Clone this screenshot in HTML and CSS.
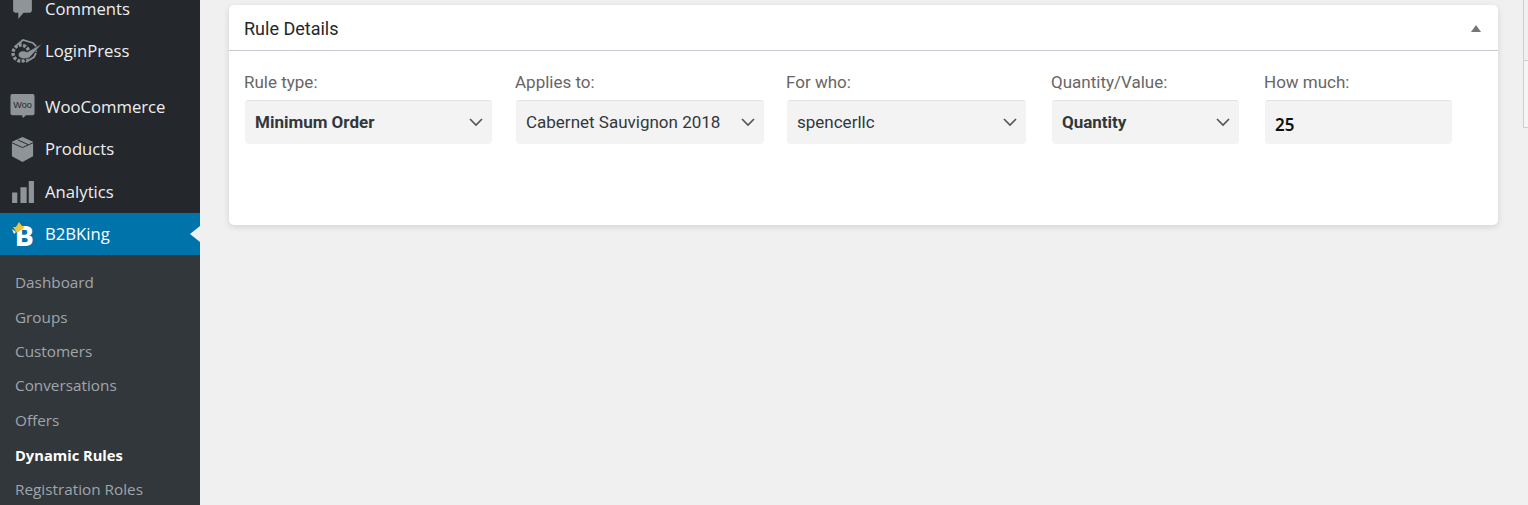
FILE: index.html
```html
<!DOCTYPE html>
<html lang="en">

<head>
    <meta charset="UTF-8">
    <meta name="viewport" content="width=device-width, initial-scale=1.0">
    <title>Rule Details</title>
    <link rel="stylesheet" href="styles.css">
</head>

<body>
    <div id="wrap">
        <!-- Admin menu -->
        <nav id="admin-menu">
            <ul class="top-menu">
                <li class="menu-item item-comments">
                    <svg class="menu-icon" viewBox="0 0 24 24"><path fill="#8f9498" d="M3 0h18v14q0 2-2 2h-6l-5 6v-6H5q-2 0-2-2z"/></svg>
                    <span>Comments</span>
                </li>
                <li class="menu-item item-login">
                    <svg class="menu-icon wide" viewBox="0 0 33 24"><circle cx="11" cy="14" r="8" fill="none" stroke="#8f9498" stroke-width="3.4" stroke-dasharray="3 1.4"/><path fill="none" stroke="#8f9498" stroke-width="1.8" d="M7 6l6-5 10 3 3 3v6M26 14l-2 4-8 5"/><path fill="#8f9498" stroke="#24282d" stroke-width="0.8" d="M8 16q1-5 7-4l2 1L33 4 22 16q-2 4-8 4-5 0-6-4z"/></svg>
                    <span>LoginPress</span>
                </li>
                <li class="menu-item item-woo">
                    <svg class="menu-icon" viewBox="0 0 25 26"><path fill="#8f9498" d="M2 0h21q2 0 2 2v18q0 2-2 2h-7l-3 3-1-3H2q-2 0-2-2V2q0-2 2-2z"/><text class="woo-text" x="12.500" y="15" text-anchor="middle">Woo</text></svg>
                    <span>WooCommerce</span>
                </li>
                <li class="menu-item item-products">
                    <svg class="menu-icon" viewBox="0 0 24 26"><path fill="#8f9498" d="M12 0l11 5v15l-11 6-11-6V5z"/><path fill="none" stroke="#24282d" d="M1 6l11 5 11-5M7 3l11 5"/></svg>
                    <span>Products</span>
                </li>
                <li class="menu-item item-analytics">
                    <svg class="menu-icon" viewBox="0 0 24 24"><path fill="#8f9498" d="M2 13h5v10H2zM10 8h6v15h-6zM18 2h5v21h-5z"/></svg>
                    <span>Analytics</span>
                </li>
                <li class="menu-item current">
                    <svg class="menu-icon" viewBox="0 0 25 25"><text class="logo-b" x="5.500" y="23.500">B</text><path fill="#fff" d="M2 7l4 3-2 2z"/><path fill="#f0c33c" d="M3 5l3 0 3-5 3 4 3 1-8 6z"/></svg>
                    <span>B2BKing</span>
                </li>
            </ul>
            <ul class="sub-menu">
                <li>Dashboard</li>
                <li>Groups</li>
                <li>Customers</li>
                <li>Conversations</li>
                <li>Offers</li>
                <li class="active">Dynamic Rules</li>
                <li>Registration Roles</li>
            </ul>
        </nav>

        <!-- Page content -->
        <main id="content">
            <section class="postbox">
                <header class="postbox-head">
                    <h2>Rule Details</h2>
                    <span class="toggle"></span>
                </header>
                <div class="rule-fields">
                    <div class="field field-type">
                        <label>Rule type:</label>
                        <div class="select bold">Minimum Order<svg viewBox="0 0 14 9"><path d="M1 1l6 6 6-6"/></svg></div>
                    </div>
                    <div class="field field-applies">
                        <label>Applies to:</label>
                        <div class="select">Cabernet Sauvignon 2018<svg viewBox="0 0 14 9"><path d="M1 1l6 6 6-6"/></svg></div>
                    </div>
                    <div class="field field-who">
                        <label>For who:</label>
                        <div class="select">spencerllc<svg viewBox="0 0 14 9"><path d="M1 1l6 6 6-6"/></svg></div>
                    </div>
                    <div class="field field-qty">
                        <label>Quantity/Value:</label>
                        <div class="select bold">Quantity<svg viewBox="0 0 14 9"><path d="M1 1l6 6 6-6"/></svg></div>
                    </div>
                    <div class="field field-much">
                        <label>How much:</label>
                        <div class="select amount">25</div>
                    </div>
                </div>
            </section>
        </main>
        <div class="edge-box"></div>
    </div>
</body>

</html>
```

FILE: styles.css
```css
html,
body {
    margin: 0;
    height: 505px;
    overflow: hidden;
}

body {
    background-color: #f0f0f1;
    font-family: "Open Sans", sans-serif;
}

#wrap {
    display: flex;
    height: 505px;
    position: relative;
}

/* Admin menu */
#admin-menu {
    width: 200px;
    flex-shrink: 0;
    background-color: #24282d;
    overflow: hidden;
}

ul {
    list-style: none;
    margin: 0;
    padding: 0;
}

.top-menu {
    margin-top: -13px;
}

.menu-item {
    display: flex;
    align-items: center;
    height: 42.5px;
    padding-left: 10px;
    color: #eeeeee;
    font-size: 16.7px;
    position: relative;
}

.menu-item span {
    position: absolute;
    left: 45px;
    top: 14px;
    line-height: 14px;
}

.item-comments span {
    top: 15px;
}

.menu-icon {
    width: 25px;
    height: 25px;
    overflow: visible;
}

.menu-icon.wide {
    width: 33px;
    height: 24px;
}

.woo-text {
    font-family: "Liberation Sans", sans-serif;
    font-size: 9.500px;
    fill: #24282d;
}

.logo-b {
    font-family: Roboto, sans-serif;
    font-size: 28px;
    font-weight: 900;
    fill: #fff;
}

.item-woo {
    margin-top: 13.5px;
}

.menu-item.current {
    background-color: #0073aa;
    color: #fff;
    height: 42px;
}

/* Little white arrow pointing at the content */
.menu-item.current::after {
    content: "";
    position: absolute;
    right: 0;
    top: 13px;
    border: 8px solid transparent;
    border-left-width: 0;
    border-right: 10px solid #f0f0f1;
}

.sub-menu {
    background-color: #32373c;
    height: 250px;
    padding-top: 10.2px;
    color: #a0a5aa;
    font-size: 15.3px;
}

.sub-menu li {
    height: 34.4px;
    line-height: 34.4px;
    padding-left: 15px;
}

.sub-menu li.active {
    color: #fff;
    font-weight: 700;
    font-size: 14.7px;
    line-height: 36px;
}

/* Rule box */
#content {
    flex: 1;
    padding: 5px 30px 0 29px;
}

.postbox {
    background-color: #fff;
    border-radius: 5px;
    height: 220px;
    box-shadow: 0 2px 6px rgba(0, 0, 0, 0.12);
}

.postbox-head {
    display: flex;
    align-items: center;
    justify-content: space-between;
    height: 44px;
    padding: 1px 17px 0 15px;
    border-bottom: 1px solid #c8c8d0;
}

.postbox-head h2 {
    margin: 0;
    font-size: 18px;
    font-weight: 400;
    font-family: Roboto, sans-serif;
    color: #23282d;
}

.toggle {
    border-left: 5px solid transparent;
    border-right: 5px solid transparent;
    border-bottom: 7px solid #72777c;
}

.rule-fields {
    display: flex;
    padding: 21px 0 0 15px;
}

.field label {
    display: block;
    font-family: Roboto, sans-serif;
    font-size: 17px;
    line-height: 20px;
    color: #666666;
    margin-bottom: 8px;
}

.field-type {
    width: 271px;
}

.field-applies {
    width: 271px;
}

.field-who {
    width: 265px;
}

.field-qty {
    width: 213px;
}

.select {
    display: flex;
    align-items: center;
    justify-content: space-between;
    box-sizing: border-box;
    height: 44px;
    margin-left: 1px;
    padding: 0 9px 2px 10px;
    background-color: #f3f3f3;
    border-top: 1px solid #e2e2e2;
    border-radius: 4px;
    font-family: Roboto, sans-serif;
    font-size: 17px;
    color: #32373c;
}

.select.bold {
    font-weight: 700;
}

.select svg {
    width: 14px;
    height: 9px;
    margin-top: 2px;
    fill: none;
    stroke: #50555a;
    stroke-width: 1.6;
}

.field-type .select {
    width: 247px;
}

.field-applies .select {
    width: 248px;
}

.field-who .select {
    width: 239px;
}

.field-qty .select {
    width: 187px;
}

.field-much .select {
    width: 187px;
}

.select.amount {
    padding-top: 3px;
    padding-bottom: 0;
    font-family: "Noto Sans", sans-serif;
    font-weight: 600;
    color: #111;
}

/* Sliver of another box at the window edge */
.edge-box {
    position: absolute;
    top: -1px;
    right: -1px;
    width: 4px;
    height: 127px;
    border: 1px solid #ccd0d4;
    background-color: #f5f5f5;
}

.edge-box::before {
    content: "";
    display: block;
    height: 60px;
    background-color: #f0f0f1;
    border-bottom: 1px solid #ccd0d4;
}
```
